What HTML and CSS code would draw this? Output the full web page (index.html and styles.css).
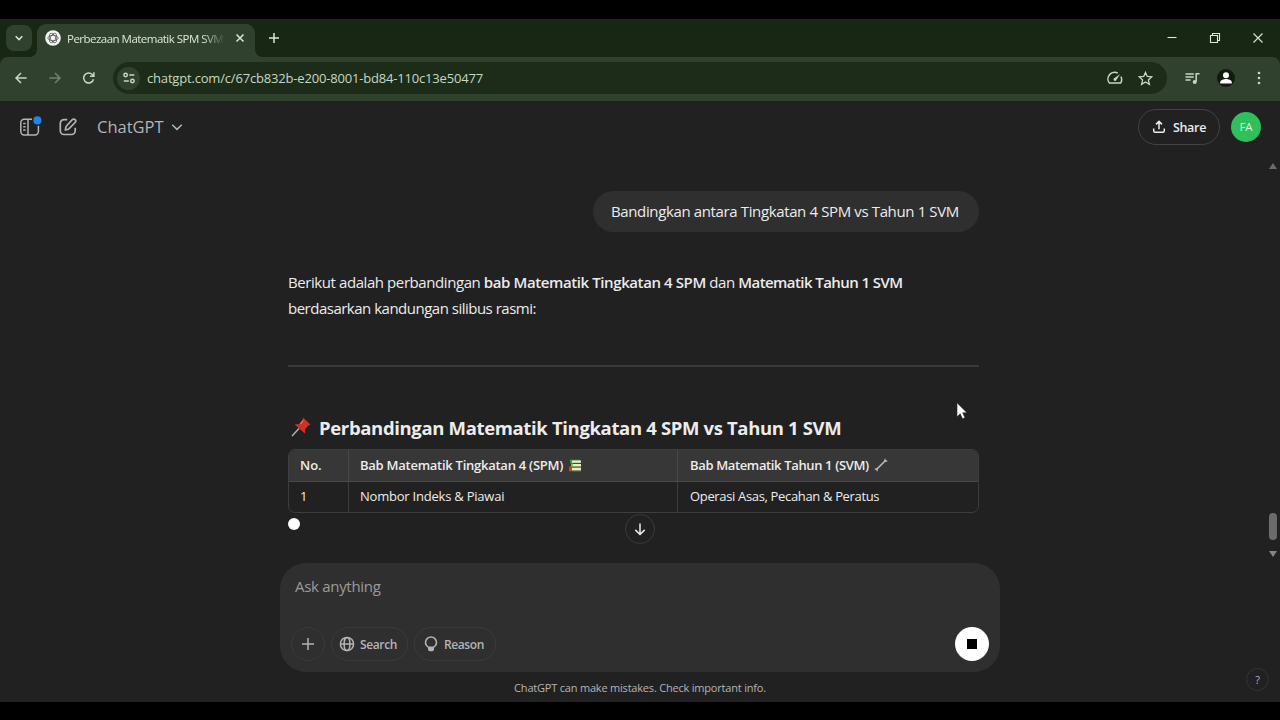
FILE: index.html
```html
<!DOCTYPE html>
<html lang="ms">

<head>
    <meta charset="UTF-8">
    <title>Perbezaan Matematik SPM SVM</title>
    <link rel="stylesheet" href="styles.css">
</head>

<body>
    <div class="window">
        <div class="tabstrip">
            <button class="tab-search">
                <svg width="10" height="10" viewBox="0 0 10 10"><path d="M1.7 3.3 5 6.6 8.3 3.3" /></svg>
            </button>
            <div class="tab">
                <svg class="favicon" width="16" height="16" viewBox="0 0 16 16">
                    <circle class="disc" cx="8" cy="8" r="7.8" />
                    <g>
                        <ellipse cx="8" cy="8" rx="5.2" ry="2.7" />
                        <ellipse cx="8" cy="8" rx="5.2" ry="2.7" transform="rotate(60 8 8)" />
                        <ellipse cx="8" cy="8" rx="5.2" ry="2.7" transform="rotate(120 8 8)" />
                    </g>
                </svg>
                <span class="tab-title">Perbezaan Matematik SPM SVM</span>
                <svg class="tab-close" width="10" height="10" viewBox="0 0 10 10"><path d="M1.5 1.5l7 7M8.5 1.5l-7 7" /></svg>
            </div>
            <svg class="new-tab" width="12" height="12" viewBox="0 0 12 12"><path d="M6 1v10M1 6h10" /></svg>
            <div class="window-controls">
                <svg width="12" height="12" viewBox="0 0 12 12"><path d="M1.5 5.5h9" /></svg>
                <svg width="12" height="12" viewBox="0 0 12 12"><path d="M1.5 3.5h7v7h-7zM3.5 3.3V1.5h7v7H8.7" /></svg>
                <svg width="12" height="12" viewBox="0 0 12 12"><path d="M1.5 1.5l9 9M10.5 1.5l-9 9" /></svg>
            </div>
        </div>

        <div class="toolbar">
            <div class="nav">
                <svg width="14" height="14" viewBox="0 0 14 14"><path d="M12.6 7H2M7 2 2 7l5 5" /></svg>
                <svg class="disabled" width="14" height="14" viewBox="0 0 14 14"><path d="M1.4 7H12M7 2l5 5-5 5" /></svg>
                <svg width="14" height="14" viewBox="0 0 14 14"><path d="M11.5 8.2A5 5 0 1 1 10.3 3.5L11.8 5M11.9 1.2V5.2H8" /></svg>
            </div>
            <div class="omnibox">
                <span class="site-info">
                    <svg width="12" height="12" viewBox="0 0 12 12"><circle cx="2.6" cy="3" r="1.7" /><path d="M6.3 3h5M.8 9h5" /><circle cx="9.4" cy="9" r="1.7" /></svg>
                </span>
                <span class="url">chatgpt.com/c/67cb832b-e200-8001-bd84-110c13e50477</span>
                <svg class="speed" width="16" height="14" viewBox="0 0 16 14"><path d="M10.8 2.2A6.6 6.6 0 0 0 2.4 12.1h11.2a6.4 6.4 0 0 0 .3-6.4" /><path class="solid" d="M13.2 3 9 9.5A1.3 1.3 0 0 1 6.9 7.6z" /></svg>
                <svg class="star" width="15" height="15" viewBox="0 0 15 15"><path d="M7.5 1.4 9.3 5.5l4.4.4-3.3 3 1 4.4-3.9-2.4-3.9 2.4 1-4.4-3.3-3 4.4-.4z" /></svg>
            </div>
            <div class="tools">
                <svg width="15" height="13" viewBox="0 0 15 13"><path d="M.5 2h8.3M.5 5h8.3M.5 8h5M11.2 9.8V1.8H14.5" /><circle class="solid" cx="9.7" cy="9.9" r="2" /></svg>
                <svg class="profile" width="18" height="18" viewBox="0 0 18 18"><circle class="disc" cx="9" cy="9" r="9" /><circle class="person" cx="9" cy="6.2" r="3" /><path class="person" d="M3.2 14.6v-1.4c0-2 3.7-3.1 5.8-3.1s5.8 1.1 5.8 3.1v1.4z" /></svg>
                <svg class="dots" width="4" height="14" viewBox="0 0 4 14"><circle cx="2" cy="2" r="1.3" /><circle cx="2" cy="7" r="1.3" /><circle cx="2" cy="12" r="1.3" /></svg>
            </div>
        </div>

        <div class="page">
            <div class="header">
                <svg class="sidebar-icon" width="24" height="24" viewBox="0 0 24 24"><rect x="2.8" y="4.3" width="17.6" height="15.6" rx="3.4" /><path d="M10 4.3v15.6M5.2 8.5h2.4M5.2 11.7h2.4M5.2 14.9h2.4" /><circle class="badge" cx="19.4" cy="5.4" r="4.8" /></svg>
                <svg class="edit-icon" width="20" height="20" viewBox="0 0 20 20"><path d="M9.2 2.6H6A3.7 3.7 0 0 0 2.3 6.3v7.5A3.7 3.7 0 0 0 6 17.5h7.5a3.7 3.7 0 0 0 3.7-3.7v-3" /><path d="M14.3 2.7a1.9 1.9 0 0 1 2.8 2.8l-6 6.1c-.8.7-2 1.1-3.7 1.2.1-1.7.4-3 1.1-3.8z" /></svg>
                <span class="model">ChatGPT</span>
                <svg class="chevron" width="12" height="12" viewBox="0 0 12 12"><path d="M1.2 3.8 6 8.4l4.8-4.6" /></svg>
                <button class="share">
                    <svg width="14" height="14" viewBox="0 0 14 14"><path d="M7 9.3V1.7M4 4.4l3-3 3 3M1.7 8.5v2.3c0 .9.6 1.500 1.500 1.500h7.600c.9 0 1.500-.6 1.500-1.500V8.500" /></svg>
                    <span>Share</span>
                </button>
                <span class="avatar">FA</span>
            </div>

            <div class="chat">
                <div class="thread">
                    <div class="question"><span>Bandingkan antara Tingkatan 4 SPM vs Tahun 1 SVM</span></div>
                    <p class="answer">
                        <span class="line1">Berikut adalah perbandingan <b>bab Matematik Tingkatan 4 SPM</b> dan <b class="tight">Matematik Tahun 1 SVM</b></span><br>
                        <span class="line2">berdasarkan kandungan silibus rasmi:</span>
                    </p>
                    <hr>
                    <h3>
                        <svg width="20" height="20" viewBox="0 0 20 20"><path class="needle" d="M8 11.5 1 19" /><path class="pin" d="M12 .6 19.4 7.4 17.2 8.8 14.2 12 14.2 16.8 3.6 7.6 8.2 7 11.2 3.8z" /><path class="shine" d="M12.3 3.3 9.3 7" /></svg>
                        <span>Perbandingan Matematik Tingkatan 4 SPM vs Tahun 1 SVM</span>
                    </h3>
                    <div class="table">
                        <div class="row head">
                            <div>No.</div>
                            <div><span class="head1">Bab Matematik Tingkatan 4 (SPM)</span>
                                <svg class="books" width="14" height="13" viewBox="0 0 14 13"><path fill="#3d9a45" d="M2 .8h10v3.4H2z" /><path fill="#efe9c8" d="M4 1.6h9v2.2H4zM5 5h8v2.4H5zM4 8.8h9v2.6H4z" /><path fill="#7fbf4d" d="M3 4.5h2v3.5H3z" /><path fill="#c4472e" d="M1 7.5h3v4.7H1z" /><path fill="#78a85b" d="M5 7.400h8v1H5zM4 11.400h9v.8H4z" /></svg>
                            </div>
                            <div><span class="head2">Bab Matematik Tahun 1 (SVM)</span>
                                <svg width="14" height="14" viewBox="0 0 14 14"><path class="wrench" d="M2.500 11.500 11.500 2.500" /><path class="jaw" d="M11.100.7 10.800 3.200l2.500-.3M.8 11.100l2.500-.3-.3 2.500" /></svg>
                            </div>
                        </div>
                        <div class="row">
                            <div>1</div>
                            <div><span class="cell1">Nombor Indeks &amp; Piawai</span></div>
                            <div><span class="cell2">Operasi Asas, Pecahan &amp; Peratus</span></div>
                        </div>
                    </div>
                    <div class="typing"></div>
                </div>
                <button class="scroll-down">
                    <svg width="14" height="14" viewBox="0 0 14 14"><path d="M7 1.500v11M2.300 7.900 7 12.500l4.700-4.600" /></svg>
                </button>
                <div class="scrollbar">
                    <span class="arrow-up"></span>
                    <span class="thumb"></span>
                    <span class="arrow-down"></span>
                </div>
            </div>

            <div class="composer">
                <div class="placeholder">Ask anything</div>
                <div class="actions">
                    <button class="plus">
                        <svg width="14" height="14" viewBox="0 0 14 14"><path d="M7 1v12M1 7h12" /></svg>
                    </button>
                    <button class="pill search">
                        <svg width="16" height="16" viewBox="0 0 16 16"><circle cx="8" cy="8" r="6.600" /><ellipse cx="8" cy="8" rx="2.900" ry="6.600" /><path d="M1.400 8h13.200" /></svg>
                        <span>Search</span>
                    </button>
                    <button class="pill reason">
                        <svg width="16" height="16" viewBox="0 0 16 16"><path d="M5.600 11.300C3.700 10.200 2.500 8.600 2.500 6.500a5.500 5.500 0 0 1 11 0c0 2.100-1.200 3.700-3.100 4.800z" /><path class="bulb-base" d="M5 11.500v1.800c0 .9.700 2 1.600 2h2.800c.9 0 1.600-1.100 1.600-2v-1.800z" /></svg>
                        <span>Reason</span>
                    </button>
                    <button class="stop"></button>
                </div>
            </div>

            <div class="footer">
                <span>ChatGPT can make mistakes. Check important info.</span>
                <button class="help">?</button>
            </div>

            <svg class="cursor" width="12" height="18" viewBox="0 0 12 18"><path d="M1 .8v14l3.200-3 2.300 5 2.500-1.100-2.300-4.900h4.300z" /></svg>
        </div>
    </div>
</body>

</html>
```
FILE: styles.css
```css
* {
    box-sizing: border-box;
}

body {
    margin: 0;
    height: 720px;
    padding: 19px 0 18px;
    background-color: #000;
    color: #ececec;
    font-family: "Open Sans", "Noto Sans", sans-serif;
    overflow: hidden;
}

button {
    display: flex;
    align-items: center;
    justify-content: center;
    padding: 0;
    border: none;
    background: none;
    color: inherit;
    font-family: inherit;
}

svg {
    display: block;
    flex: none;
    fill: none;
    stroke: currentColor;
    stroke-width: 1.5;
}

span {
    white-space: nowrap;
}

.window {
    height: 683px;
    display: flex;
    flex-direction: column;
    background-color: #182713;
}

/* browser tabs */
.tabstrip {
    height: 38px;
    display: flex;
    align-items: center;
    padding-left: 6px;
    color: #dde6d8;
}

.tab-search {
    width: 26px;
    height: 26px;
    border-radius: 8px;
    background-color: #30422e;
}

.tab {
    width: 218px;
    height: 33px;
    margin: 5px 0 0 5px;
    padding: 0 10px 5px 8px;
    display: flex;
    align-items: center;
    position: relative;
    border-radius: 9px 9px 0 0;
    background-color: #30422e;
}

.tab::before,
.tab::after {
    content: "";
    position: absolute;
    bottom: 0;
    width: 7px;
    height: 7px;
}

.tab::before {
    left: -7px;
    background: radial-gradient(circle at 0 0, transparent 6.5px, #30422e 7px);
}

.tab::after {
    right: -7px;
    background: radial-gradient(circle at 100% 0, transparent 6.5px, #30422e 7px);
}

.favicon {
    color: #555;
    stroke-width: 0.8;
}

.favicon .disc {
    fill: #f4f4f4;
    stroke: none;
}

.tab-title {
    width: 158px;
    margin-left: 6px;
    font-size: 11.5px;
    letter-spacing: -0.52px;
    -webkit-mask-image: linear-gradient(to right, #000 136px, transparent 158px);
    mask-image: linear-gradient(to right, #000 136px, transparent 158px);
}

.tab-close {
    margin-left: 10px;
}

.new-tab {
    margin-left: 13px;
}

.window-controls {
    display: flex;
    gap: 31px;
    margin-left: auto;
    padding-right: 16px;
}

.window-controls svg {
    stroke-width: 1.1;
}

.toolbar {
    height: 44px;
    display: flex;
    align-items: center;
    padding: 0 0 2px 14px;
    border-radius: 8px 8px 0 0;
    background-color: #30422e;
    color: #c8d6c2;
}

.nav {
    display: flex;
    gap: 20px;
    width: 99px;
}

.nav .disabled {
    color: #71816d;
}

.omnibox {
    width: 1054px;
    height: 32px;
    padding: 0 14px 0 4px;
    display: flex;
    align-items: center;
    border-radius: 16px;
    background-color: #1c2c18;
}

.site-info {
    width: 23px;
    height: 23px;
    display: flex;
    align-items: center;
    justify-content: center;
    border-radius: 50%;
    background-color: #30422e;
}

.url {
    margin: 0 auto 0 7px;
    font-size: 13px;
    letter-spacing: -0.18px;
}

.solid {
    fill: currentColor;
    stroke: none;
}

.star {
    margin-left: 15px;
    stroke-width: 1.3;
}

.tools {
    display: flex;
    align-items: center;
    margin-left: 18px;
}

.profile {
    margin: 0 22px 0 17px;
}

.profile .disc {
    fill: #111c0e;
    stroke: none;
}

.profile .person {
    fill: #fff;
    stroke: none;
}

.dots {
    fill: currentColor;
    stroke: none;
}

/* page */
.page {
    flex: 1;
    display: flex;
    flex-direction: column;
    position: relative;
    background-color: #212121;
}

.header {
    height: 52px;
    display: flex;
    align-items: center;
    padding: 0 19px 0 18px;
    color: #b4b4b4;
}

.sidebar-icon .badge {
    fill: #1d86e8;
    stroke: #212121;
    stroke-width: 1.5;
}

.edit-icon {
    margin-left: 16px;
    stroke-width: 1.7;
}

.model {
    margin: -1px 0 0 19px;
    font-size: 16.5px;
    font-weight: 500;
    letter-spacing: 0;
}

.chevron {
    margin-left: 7px;
}

.share {
    width: 82px;
    height: 36px;
    margin: 0 11px 0 auto;
    gap: 7px;
    border: 1px solid #424242;
    border-radius: 18px;
    color: #ececec;
    font-size: 12.5px;
    font-weight: 600;
    letter-spacing: -0.3px;
}

.avatar {
    width: 30px;
    height: 30px;
    border-radius: 50%;
    background-color: #2fbf5b;
    color: #d4f5dd;
    font-size: 11.5px;
    line-height: 30px;
    text-align: center;
}

.chat {
    height: 410px;
    position: relative;
}

.thread {
    width: 691px;
    margin-left: 288px;
    padding-top: 38px;
}

.question {
    width: 386px;
    height: 41px;
    margin-left: auto;
    padding-left: 18px;
    border-radius: 21px;
    background-color: #2f2f2f;
    font-size: 15px;
    line-height: 41px;
    letter-spacing: -0.37px;
}

.answer {
    margin: 37px 0 0;
    font-size: 15px;
    line-height: 26px;
}

.answer b {
    font-weight: 600;
    letter-spacing: -0.4px;
}

.line1 {
    letter-spacing: -0.42px;
}

.line2 {
    letter-spacing: -0.5px;
}

.answer .tight {
    letter-spacing: -0.57px;
}

hr {
    height: 2px;
    margin: 44px 0 0;
    border: none;
    background-color: #3a3a3a;
}

h3 {
    height: 30px;
    margin: 45px 0 0;
    display: flex;
    align-items: center;
    gap: 8px;
    padding-left: 3px;
    font-size: 18.5px;
    font-weight: 700;
    letter-spacing: -0.35px;
}

.needle {
    stroke: #a9b2b8;
}

.pin {
    fill: #d32f26;
    stroke: none;
}

.shine {
    stroke: #f0766c;
    stroke-width: 1.2;
}

.table {
    height: 64px;
    margin-top: 7px;
    border: 1px solid #3d3d3d;
    border-radius: 7px;
    overflow: hidden;
    font-size: 13px;
}

.row {
    height: 30px;
    display: grid;
    grid-template-columns: 60px 329px 1fr;
}

.row div {
    display: flex;
    align-items: center;
    gap: 5px;
    padding: 0 0 2px 11px;
    border-right: 1px solid #3d3d3d;
}

.row div:last-child {
    padding-left: 12px;
    border-right: none;
}

.head {
    height: 32px;
    border-bottom: 1px solid #484848;
    background-color: #373737;
    font-weight: 600;
}

.head div {
    padding-bottom: 1px;
    border-color: #484848;
}

.head1 {
    letter-spacing: -0.26px;
}

.head2 {
    letter-spacing: -0.36px;
}

.cell1 {
    letter-spacing: -0.22px;
}

.cell2 {
    letter-spacing: -0.34px;
}

.books {
    stroke: none;
}

.wrench {
    stroke: #b5bcc2;
    stroke-width: 1.6;
}

.jaw {
    stroke: #b5bcc2;
    stroke-width: 1.2;
}

.typing {
    width: 12px;
    height: 12px;
    margin: 5px 0 0;
    border-radius: 50%;
    background-color: #fff;
}

.scroll-down {
    position: absolute;
    left: 625px;
    top: 361px;
    width: 30px;
    height: 30px;
    border: 1px solid #3a3a3a;
    border-radius: 50%;
    background-color: #212121;
}

.scrollbar {
    position: absolute;
    right: 3px;
    top: 10px;
    width: 9px;
    height: 396px;
    display: flex;
    flex-direction: column;
    align-items: center;
}

.arrow-up {
    border: 4px solid transparent;
    border-top: none;
    border-bottom: 6px solid #6b6b6b;
}

.thumb {
    width: 8px;
    height: 27px;
    margin: 344px 0 11px;
    border-radius: 4px;
    background-color: #6b6b6b;
}

.arrow-down {
    border: 4px solid transparent;
    border-bottom: none;
    border-top: 6px solid #858585;
}

.composer {
    width: 720px;
    height: 109px;
    margin: 0 auto;
    padding: 12px 11px 0;
    border-radius: 26px;
    background-color: #2f2f2f;
}

.placeholder {
    height: 24px;
    padding-left: 4px;
    color: #9b9b9b;
    font-size: 15px;
    line-height: 23px;
    letter-spacing: -0.3px;
}

.actions {
    display: flex;
    align-items: center;
    gap: 6px;
    margin-top: 28px;
    color: #b4b4b4;
}

.plus {
    width: 34px;
    height: 34px;
    border: 1px solid #3b3b3b;
    border-radius: 50%;
}

.pill {
    height: 34px;
    padding-right: 3px;
    gap: 5px;
    border: 1px solid #3b3b3b;
    border-radius: 17px;
    font-size: 12px;
    font-weight: 600;
    letter-spacing: -0.4px;
}

.search {
    width: 77px;
}

.reason {
    width: 82px;
}

.bulb-base {
    fill: currentColor;
    stroke: none;
}

.stop {
    width: 34px;
    height: 34px;
    margin-left: auto;
    border-radius: 50%;
    background-color: #fff;
}

.stop::before {
    content: "";
    width: 10px;
    height: 10px;
    background-color: #000;
}

.footer {
    height: 30px;
    display: flex;
    align-items: center;
    justify-content: center;
    position: relative;
    color: #b4b4b4;
    font-size: 11px;
    letter-spacing: -0.2px;
}

.help {
    position: absolute;
    right: 11px;
    top: -4px;
    width: 23px;
    height: 23px;
    border: 1px solid #343434;
    border-radius: 50%;
    font-size: 11px;
}

.cursor {
    position: absolute;
    left: 956px;
    top: 301px;
    fill: #fff;
    stroke: #222;
    stroke-width: 0.6;
}
```
